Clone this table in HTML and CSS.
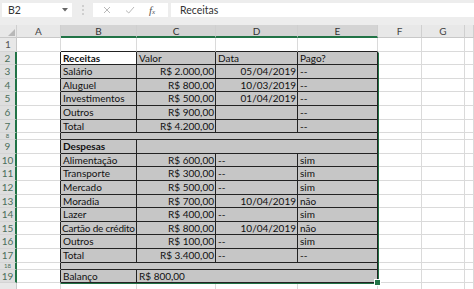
FILE: index.html
```html
<!DOCTYPE html>
<html><head><meta charset="utf-8"><link rel="stylesheet" href="styles.css"></head>
<body>
<div class="app">
  <div class="fbar">
    <div class="namebox"><span>B2</span><svg width="6" height="4" viewBox="0 0 6 4"><path d="M0 0H6L3 3.5Z" fill="#666"/></svg></div>
    <div class="grip"><svg width="2" height="10" viewBox="0 0 2 10"><circle cx="1" cy="1" r="0.8" fill="#a8a8a8"/><circle cx="1" cy="5" r="0.8" fill="#a8a8a8"/><circle cx="1" cy="9" r="0.8" fill="#a8a8a8"/></svg></div>
    <div class="fbtns">
      <svg width="8" height="8" viewBox="0 0 8 8"><path d="M1 1L7 7M7 1L1 7" stroke="#b8b8b8" stroke-width="1"/></svg>
      <svg width="10" height="8" viewBox="0 0 10 8"><path d="M1 4.5L3.8 7L9 1" stroke="#b8b8b8" fill="none"/></svg>
      <span class="fx">f<span class="fxx">x</span></span>
    </div>
    <div class="finput">Receitas</div>
  </div>
  <div class="sheet">
    <div class="corner"><svg width="7" height="7" viewBox="0 0 7 7"><path d="M7 0V7H0Z" fill="#b8b8b8"/></svg></div>
    <div class="ch">A</div><div class="ch sel">B</div><div class="ch sel">C</div><div class="ch sel">D</div><div class="ch sel">E</div><div class="ch">F</div><div class="ch">G</div><div class="ch"></div>

    <div class="rh">1</div><div class="c"></div><div class="c tb"></div><div class="c tb"></div><div class="c tb"></div><div class="c tb"></div><div class="c"></div><div class="c"></div><div class="c"></div>

    <div class="rh sel">2</div><div class="c lb"></div><div class="t act b">Receitas</div><div class="t">Valor</div><div class="t">Data</div><div class="t">Pago?</div><div class="c"></div><div class="c"></div><div class="c"></div>

    <div class="rh sel">3</div><div class="c lb"></div><div class="t">Salário</div><div class="t r">R$ 2.000,00</div><div class="t r">05/04/2019</div><div class="t">--</div><div class="c"></div><div class="c"></div><div class="c"></div>

    <div class="rh sel">4</div><div class="c lb"></div><div class="t">Aluguel</div><div class="t r">R$ 800,00</div><div class="t r">10/03/2019</div><div class="t">--</div><div class="c"></div><div class="c"></div><div class="c"></div>

    <div class="rh sel">5</div><div class="c lb"></div><div class="t">Investimentos</div><div class="t r">R$ 500,00</div><div class="t r">01/04/2019</div><div class="t">--</div><div class="c"></div><div class="c"></div><div class="c"></div>

    <div class="rh sel">6</div><div class="c lb"></div><div class="t">Outros</div><div class="t r">R$ 900,00</div><div class="t"></div><div class="t">--</div><div class="c"></div><div class="c"></div><div class="c"></div>

    <div class="rh sel">7</div><div class="c lb"></div><div class="t">Total</div><div class="t r">R$ 4.200,00</div><div class="t"></div><div class="t">--</div><div class="c"></div><div class="c"></div><div class="c"></div>

    <div class="rh sel short">8</div><div class="c lb"></div><div class="t span4"></div><div class="c"></div><div class="c"></div><div class="c"></div>

    <div class="rh sel">9</div><div class="c lb"></div><div class="t b">Despesas</div><div class="t span3"></div><div class="c"></div><div class="c"></div><div class="c"></div>

    <div class="rh sel">10</div><div class="c lb"></div><div class="t">Alimentação</div><div class="t r">R$ 600,00</div><div class="t">--</div><div class="t">sim</div><div class="c"></div><div class="c"></div><div class="c"></div>

    <div class="rh sel">11</div><div class="c lb"></div><div class="t">Transporte</div><div class="t r">R$ 300,00</div><div class="t">--</div><div class="t">sim</div><div class="c"></div><div class="c"></div><div class="c"></div>

    <div class="rh sel">12</div><div class="c lb"></div><div class="t">Mercado</div><div class="t r">R$ 500,00</div><div class="t">--</div><div class="t">sim</div><div class="c"></div><div class="c"></div><div class="c"></div>

    <div class="rh sel">13</div><div class="c lb"></div><div class="t">Moradia</div><div class="t r">R$ 700,00</div><div class="t r">10/04/2019</div><div class="t">não</div><div class="c"></div><div class="c"></div><div class="c"></div>

    <div class="rh sel">14</div><div class="c lb"></div><div class="t">Lazer</div><div class="t r">R$ 400,00</div><div class="t">--</div><div class="t">sim</div><div class="c"></div><div class="c"></div><div class="c"></div>

    <div class="rh sel">15</div><div class="c lb"></div><div class="t tight">Cartão de crédito</div><div class="t r">R$ 800,00</div><div class="t r">10/04/2019</div><div class="t">não</div><div class="c"></div><div class="c"></div><div class="c"></div>

    <div class="rh sel">16</div><div class="c lb"></div><div class="t">Outros</div><div class="t r">R$ 100,00</div><div class="t">--</div><div class="t">sim</div><div class="c"></div><div class="c"></div><div class="c"></div>

    <div class="rh sel">17</div><div class="c lb"></div><div class="t">Total</div><div class="t r">R$ 3.400,00</div><div class="t">--</div><div class="t">--</div><div class="c"></div><div class="c"></div><div class="c"></div>

    <div class="rh sel short">18</div><div class="c lb"></div><div class="t span4"></div><div class="c"></div><div class="c"></div><div class="c"></div>

    <div class="rh sel">19</div><div class="c lb"></div><div class="t">Balanço</div><div class="t span3">R$ 800,00</div><div class="c"></div><div class="c"></div><div class="c"></div>

    <div class="rh"></div><div class="c"></div><div class="c"></div><div class="c"></div><div class="c"></div><div class="c"></div><div class="c"></div><div class="c"></div><div class="c"></div>

    <div class="selection"></div>
  </div>
</div>
</body></html>
```
FILE: styles.css
```css
* { box-sizing: border-box; margin: 0; padding: 0; }
body { margin: 0; width: 474px; height: 289px; overflow: hidden; background: #fff; font-family: Lato, "Liberation Sans", sans-serif; }
.app { display: flex; flex-direction: column; width: 474px; height: 289px; overflow: hidden; }

.fbar { height: 25px; flex: none; display: flex; align-items: flex-start; padding: 3px 0 0 2px; background: #ededed; }
.namebox { width: 70px; height: 14px; background: #fff; display: flex; align-items: center; justify-content: space-between; padding: 0 4px 0 6px; font-size: 10.5px; color: #333; }
.grip { width: 21px; height: 14px; display: flex; align-items: center; justify-content: center; }
.fbtns { width: 75px; height: 14px; background: #fff; display: flex; align-items: center; padding-left: 10px; gap: 14px; }
.fx { font-family: "Liberation Serif", serif; font-style: italic; font-size: 11px; color: #555; }
.fxx { font-size: 7px; }
.finput { flex: 1; height: 14px; margin-left: 3px; background: #fff; padding-left: 9px; font-size: 10.5px; line-height: 14px; color: #333; }

.sheet { position: relative; flex: 1; display: grid;
  grid-template-columns: 17px 44px 76px 79px 82px 80px 44px 43px 1fr;
  grid-template-rows: 13px repeat(7, 13.6px) 7px repeat(9, 13.6px) 7px 13.6px 13.6px;
  overflow: hidden; font-size: 10px; color: #111; }

.corner { background: #e8e8e8; border-right: 1px solid #cfcfcf; border-bottom: 1px solid #c8c8c8; display: flex; align-items: flex-end; justify-content: flex-end; padding: 0 1px 1px 0; }
.ch { background: #e8e8e8; border-right: 1px solid #cfcfcf; border-bottom: 1px solid #c8c8c8; text-align: center; font-size: 10px; line-height: 12px; color: #444; }
.ch.sel { background: #d4d4d4; border-bottom: 2px solid #217346; color: #333; }

.rh { background: #e8e8e8; border-right: 1px solid #c8c8c8; border-bottom: 1px solid #d4d4d4; text-align: center; font-size: 10px; line-height: 13px; color: #555; overflow: hidden; }
.rh.sel { background: #dedede; border-right: 2px solid #217346; color: #4c6e5b; }
.rh.short { line-height: 6px; font-size: 6px; }

.c, .t { border-right: 1px solid #dadada; border-bottom: 1px solid #dadada; white-space: nowrap; overflow: hidden; padding: 1px 2px 0; line-height: 11.6px; }
.c.tb { border-bottom-color: #222; }
.c.lb { border-right-color: #222; }
.t { background: #c6c6c6; border-right-color: #222; border-bottom-color: #222; }
.t.act { background: #fff; }
.t.tight { padding-left: 1px; padding-right: 0; letter-spacing: -0.2px; }
.r { text-align: right; padding-right: 1px; }
.b { font-weight: bold; }
.span4 { grid-column: span 4; }
.span3 { grid-column: span 3; }

.selection { position: absolute; grid-area: 3 / 3 / 21 / 7; top: 0; left: -1px; right: -1px; bottom: -1px; border: 1px solid #217346; border-left-color: transparent; border-top-color: transparent; pointer-events: none; }
.selection::after { content: ""; position: absolute; right: -3px; bottom: -3px; width: 5px; height: 5px; background: #217346; border: 1px solid #fff; }
```
